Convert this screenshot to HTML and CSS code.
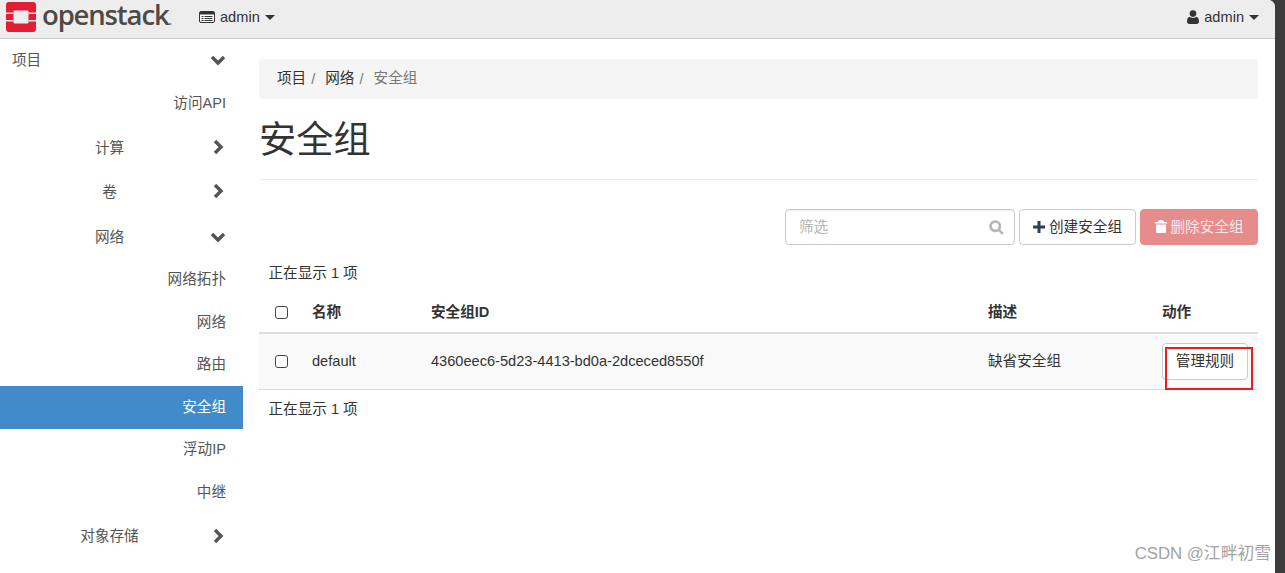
FILE: index.html
```html
<!DOCTYPE html>
<html lang="zh-CN">
<head>
<meta charset="utf-8">
<title>安全组</title>
<link rel="stylesheet" href="styles.css">
</head>
<body>
<div class="screen">
  <div class="window">
    <header class="navbar">
      <div class="brand">
        <svg class="logo" width="30" height="30" viewBox="0 0 30 30">
          <path fill="#e01e36" fill-rule="evenodd" d="M3 0h24a3 3 0 0 1 3 3v24a3 3 0 0 1-3 3H3a3 3 0 0 1-3-3V3a3 3 0 0 1 3-3zM8.500 8.500a1 1 0 0 0-1 1v11a1 1 0 0 0 1 1h13a1 1 0 0 0 1-1v-11a1 1 0 0 0-1-1z"/>
          <path fill="#eee" d="M0 10.500h7.500v1.500H0zM0 18h7.500v1.500H0zM22.500 10.500H30v1.500h-7.500zM22.500 18H30v1.500h-7.500z"/>
        </svg>
        <span class="brand-name">openstack<span class="brand-dot">.</span></span>
      </div>
      <div class="nav-menu nav-project">
        <svg class="nav-icon" width="16" height="12" viewBox="0 0 16 12">
          <rect x=".5" y=".5" width="15" height="11" rx="1.500" fill="#fff" stroke="#333"/>
          <path fill="#333" d="M1 1h14v2.500H1zM2.500 5h2v1h-2zM5.500 5h8v1h-8zM2.500 7h2v1h-2zM5.500 7h8v1h-8zM2.500 9h2v1h-2zM5.500 9h8v1h-8z"/>
        </svg>
        <span>admin</span><i class="caret"></i>
      </div>
      <div class="nav-menu nav-user">
        <svg class="nav-icon" width="12" height="14" viewBox="0 0 12 14">
          <circle cx="6" cy="3.600" r="3.300" fill="#333"/>
          <path fill="#333" d="M0 11.500C0 8.500 1.200 7 2.800 6.800 3.600 7.500 4.700 8 6 8s2.400-.5 3.200-1.200C10.800 7 12 8.500 12 11.500c0 1.600-1 2.500-2.300 2.500H2.300C1 14 0 13.100 0 11.500z"/>
        </svg>
        <span>admin</span><i class="caret"></i>
      </div>
    </header>
    <div class="body">
      <nav class="sidebar">
        <a class="side-item side-root"><span class="label-left">项目</span>
          <svg class="chev" width="16" height="16" viewBox="0 0 16 16"><path d="M2 5l6 6 6-6"/></svg></a>
        <a class="side-sub side-first">访问API</a>
        <a class="side-item"><span class="label-mid">计算</span>
          <svg class="chev" width="16" height="16" viewBox="0 0 16 16"><path d="M5 2l6 6-6 6"/></svg></a>
        <a class="side-item"><span class="label-mid">卷</span>
          <svg class="chev" width="16" height="16" viewBox="0 0 16 16"><path d="M5 2l6 6-6 6"/></svg></a>
        <a class="side-item side-open"><span class="label-mid">网络</span>
          <svg class="chev" width="16" height="16" viewBox="0 0 16 16"><path d="M2 5l6 6 6-6"/></svg></a>
        <a class="side-sub">网络拓扑</a>
        <a class="side-sub">网络</a>
        <a class="side-sub">路由</a>
        <a class="side-sub active">安全组</a>
        <a class="side-sub side-float">浮动IP</a>
        <a class="side-sub">中继</a>
        <a class="side-item side-last"><span class="label-mid">对象存储</span>
          <svg class="chev" width="16" height="16" viewBox="0 0 16 16"><path d="M5 2l6 6-6 6"/></svg></a>
      </nav>
      <main class="content">
        <ol class="breadcrumb">
          <li class="crumb">项目</li>
          <li class="sep">/</li>
          <li class="crumb">网络</li>
          <li class="sep">/</li>
          <li class="crumb current">安全组</li>
        </ol>
        <h1 class="page-title">安全组</h1>
        <div class="toolbar">
          <div class="search">
            <input class="search-input" type="text" placeholder="筛选">
            <svg class="search-icon" width="15" height="15" viewBox="0 0 15 15"><circle cx="6.200" cy="6.200" r="4.700"/><path d="M9.800 9.800l4 4"/></svg>
          </div>
          <button class="btn" type="button">
            <svg width="12" height="12" viewBox="0 0 12 12"><path fill="#2c3e50" d="M4.500 0h3v4.500H12v3H7.500V12h-3V7.500H0v-3h4.500z"/></svg>创建安全组</button>
          <button class="btn btn-danger" type="button">
            <svg width="12" height="13" viewBox="0 0 12 13"><path fill="#fff" d="M4 0h4l1 2h3v1.500H0V2h3zM1 4.500h10V12a1 1 0 0 1-1 1H2a1 1 0 0 1-1-1z"/></svg>删除安全组</button>
        </div>
        <div class="count">正在显示 1 项</div>
        <table class="table">
          <colgroup>
            <col class="col-check"><col class="col-name"><col class="col-id"><col class="col-desc"><col class="col-action">
          </colgroup>
          <thead>
            <tr>
              <th><input class="check" type="checkbox"></th>
              <th class="cjk-head">名称</th>
              <th class="cjk-head">安全组ID</th>
              <th class="cjk-head">描述</th>
              <th class="cjk-head">动作</th>
            </tr>
          </thead>
          <tbody>
            <tr>
              <td><input class="check" type="checkbox"></td>
              <td>default</td>
              <td>4360eec6-5d23-4413-bd0a-2dceced8550f</td>
              <td class="cjk-cell">缺省安全组</td>
              <td class="action-cell"><button class="btn btn-row" type="button">管理规则</button><span class="annotation"></span></td>
            </tr>
          </tbody>
        </table>
        <div class="count count-bottom">正在显示 1 项</div>
      </main>
    </div>
    <div class="watermark">CSDN @江畔初雪</div>
  </div>
  <div class="strip"></div>
</div>
</body>
</html>
```
FILE: styles.css
```css
* { box-sizing: border-box; }
html, body { margin: 0; height: 100%; }
body {
  background: #3c3c3c;
  color: #333;
  font-family: "Liberation Sans", "Noto Sans CJK SC", sans-serif;
  font-size: 14.6px;
  overflow: hidden;
}
.screen { display: flex; height: 573px; }
.strip { width: 10px; flex: none; background: #3c3c3c; }
.window {
  position: relative;
  flex: 1;
  background: #fff;
  border-top-right-radius: 7px;
  overflow: hidden;
}
.navbar {
  display: flex;
  align-items: center;
  height: 39px;
  background: #ededed;
  border-bottom: 1px solid #ccc;
  padding: 0 0 4px 6px;
}
.brand { display: flex; align-items: center; gap: 6px; width: 194px; }
.logo { flex: none; }
.brand-name {
  font-family: "Open Sans", sans-serif;
  font-size: 27.5px;
  font-weight: 600;
  letter-spacing: -1.15px;
  line-height: 28px;
  margin-top: 1px;
  color: #4e4a47;
}
.brand-dot { font-size: 12px; font-weight: 700; color: #777; }
.nav-menu { display: flex; align-items: center; color: #333; }
.nav-project { margin-left: -1px; }
.nav-icon { margin-right: 5px; }
.nav-user { margin-left: auto; margin-right: 16px; }
.caret {
  width: 0;
  height: 0;
  margin-left: 5px;
  border-left: 5px solid transparent;
  border-right: 5px solid transparent;
  border-top: 5px solid #333;
}
.body { display: flex; }
.sidebar { width: 243px; flex: none; color: #555; }
.side-item {
  display: flex;
  align-items: center;
  justify-content: space-between;
  height: 44px;
  padding-right: 17px;
}
.side-root { height: 42px; }
.side-open { height: 45px; }
.side-sub {
  display: block;
  height: 42.7px;
  line-height: 42.7px;
  padding-right: 17px;
  text-align: right;
}
.side-first { height: 44px; line-height: 44px; }
.side-float { line-height: 41px; }
.side-sub.active { background: #428bca; color: #fff; }
.label-left { margin: 0 0 4px 12px; }
.label-mid { flex: none; width: 219px; margin-right: -30px; text-align: center; margin-bottom: 2px; }
.side-open .label-mid { margin-bottom: 0; }
.side-open .chev { margin-top: 2px; }
.side-last .label-mid { margin-bottom: 3px; }
.chev { flex: none; fill: none; stroke: #555; stroke-width: 3.4px; }
.side-item .chev { margin-right: 0; }
.content { flex: 1; padding: 20px 17px 0 16px; min-width: 0; }
.breadcrumb {
  display: flex;
  align-items: center;
  height: 40px;
  margin: 0;
  padding: 0 18px;
  list-style: none;
  background: #f5f5f5;
  border-radius: 4px;
}
.crumb { margin-bottom: 6px; }
.sep { color: #777; margin: 0 10px 0 5px; }
.current { color: #777; }
.page-title {
  margin: 0;
  height: 81px;
  border-bottom: 1px solid #eee;
  font-size: 37.2px;
  font-weight: 400;
  line-height: 83px;
  color: #333;
}
.toolbar { display: flex; justify-content: flex-end; gap: 4px; margin-top: 29px; height: 36px; }
.search { position: relative; width: 230px; }
.search-input {
  width: 100%;
  height: 100%;
  padding: 0 30px 0 13px;
  border: 1px solid #ccc;
  border-radius: 4px;
  background: #fff;
  font: inherit;
  color: #333;
  box-shadow: inset 0 1px 1px rgba(0,0,0,.075);
}
.search-input::placeholder { color: #b4b4b4; opacity: 1; }
.search-icon {
  position: absolute;
  right: 11px;
  top: 11px;
  fill: none;
  stroke: #b5b5b5;
  stroke-width: 2.6px;
}
.btn {
  display: inline-flex;
  align-items: center;
  justify-content: center;
  gap: 4px;
  width: 117px;
  height: 36px;
  padding: 0 0 3px;
  background: #fff;
  border: 1px solid #ccc;
  border-radius: 4px;
  color: #333;
  font: inherit;
}
.btn svg { margin-top: 2px; }
.btn-danger {
  width: 118px;
  background: #e68c8b;
  border-color: #e68c8b;
  color: #fbeaea;
}
.btn-row { width: 86px; height: 37px; padding-bottom: 4px; }
.count { height: 20px; line-height: 20px; margin: 18px 0 0 9.500px; }
.count-bottom { margin-top: 9px; }
.table {
  width: 100%;
  table-layout: fixed;
  border-collapse: collapse;
  margin-top: 10px;
}
.col-check { width: 45px; }
.col-name { width: 119px; }
.col-id { width: 557px; }
.col-desc { width: 174px; }
.col-action { width: 104px; }
.table th, .table td { padding: 0 8px; text-align: left; }
.table th {
  height: 40px;
  font-weight: 700;
  border-bottom: 2px solid #ddd;
}
.table .cjk-head { padding-bottom: 5px; }
.table td {
  height: 56px;
  background: #f9f9f9;
  border-bottom: 1px solid #ddd;
}
.table .cjk-cell { padding-bottom: 3px; }
.check {
  appearance: none;
  display: block;
  width: 13px;
  height: 13px;
  margin: 0 0 0 8px;
  border: 1.500px solid #444;
  border-radius: 3px;
  background: #fff;
}
.action-cell { position: relative; }
.annotation {
  position: absolute;
  left: 11px;
  top: 13px;
  width: 88px;
  height: 43px;
  border: 2px solid #ed1c24;
  pointer-events: none;
}
.watermark {
  position: absolute;
  right: 4px;
  bottom: 7px;
  color: #a3a3a3;
  font-size: 16.8px;
  line-height: 24px;
}
```
